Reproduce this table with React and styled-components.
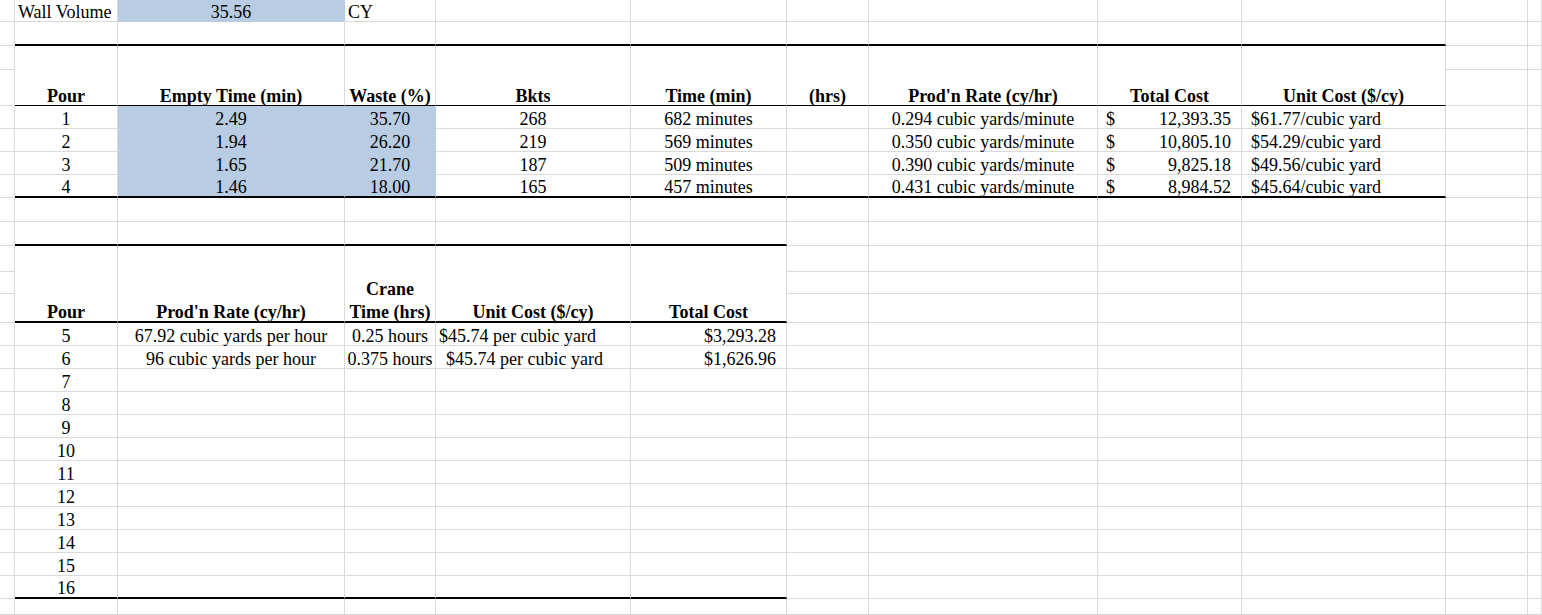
import React from "react";
import styled, { createGlobalStyle, css } from "styled-components";

const GRID = "#dadada";
const BLUE = "#b8cce4";

const GlobalStyle = createGlobalStyle`
  html, body {
    margin: 0;
    padding: 0;
    background: #fff;
    overflow: hidden;
  }
`;

const Sheet = styled.div`
  display: grid;
  grid-template-columns: 15px 103px 227px 91px 195px 156px 82px 229px 144px 204px 82px 1fr;
  grid-template-rows:
    22px 24px 24px 36px repeat(4, 23px) 24px 24px 26px 22px 29px
    repeat(12, 23px) 1fr;
  width: 1542px;
  height: 615px;
  font-family: "Times New Roman", "Liberation Serif", serif;
  font-size: 18px;
  color: #000;
  background: #fff;
`;

const edges = {
  thin: css`
    border-bottom: 1px solid #000;
  `,
  thick: css`
    border-bottom: 2px solid #000;
  `,
};

const justify = { left: "flex-start", right: "flex-end", center: "center" };

const Cell = styled.div`
  box-sizing: border-box;
  display: flex;
  align-items: flex-end;
  justify-content: ${({ $align }) => justify[$align || "center"]};
  padding: 0 ${({ $padRight }) => $padRight ?? 3}px 0 ${({ $pad }) => $pad ?? 3}px;
  grid-row: span ${({ $span }) => $span || 1};
  background: ${({ $fill }) => $fill || "transparent"};
  border-right: 1px solid ${({ $fill }) => $fill || GRID};
  border-bottom: 1px solid ${({ $fill }) => $fill || GRID};
  ${({ $edge }) => $edge && edges[$edge]}
  font-weight: ${({ $bold }) => ($bold ? 700 : 400)};
  line-height: 18px;
  white-space: nowrap;
`;

// accounting format: "$" hugs the left, figure hugs the right
const MoneyCell = styled(Cell)`
  justify-content: space-between;
  padding: 0 10px 0 8px;
`;

// wrapped header text, two lines stacked at the bottom of the cell
const StackedHeader = styled(Cell)`
  flex-direction: column;
  align-items: center;
  justify-content: flex-end;
  gap: 5px;
`;

const blank = () => ({});
const blanks = (n, extra = {}) => Array.from({ length: n }, () => ({ ...extra }));
const covered = (n) => Array.from({ length: n }, () => null);

const pours = [
  { n: 1, empty: "2.49", waste: "35.70", bkts: 268, time: "682 minutes", rate: "0.294 cubic yards/minute", total: "12,393.35", unit: "$61.77/cubic yard" },
  { n: 2, empty: "1.94", waste: "26.20", bkts: 219, time: "569 minutes", rate: "0.350 cubic yards/minute", total: "10,805.10", unit: "$54.29/cubic yard" },
  { n: 3, empty: "1.65", waste: "21.70", bkts: 187, time: "509 minutes", rate: "0.390 cubic yards/minute", total: "9,825.18", unit: "$49.56/cubic yard" },
  { n: 4, empty: "1.46", waste: "18.00", bkts: 165, time: "457 minutes", rate: "0.431 cubic yards/minute", total: "8,984.52", unit: "$45.64/cubic yard" },
];

const cranePours = [
  { n: 5, rate: "67.92 cubic yards per hour", crane: "0.25 hours", unit: "$45.74 per cubic yard", unitPad: 3, total: "$3,293.28" },
  { n: 6, rate: "96 cubic yards per hour", crane: "0.375 hours", unit: "$45.74 per cubic yard", unitPad: 10, total: "$1,626.96" },
  ...Array.from({ length: 10 }, (_, i) => ({ n: i + 7 })),
];

const head = (t, span, edge) => ({ t, bold: true, span, edge });

const rows = [
  [blank(), { t: "Wall Volume", align: "left" }, { t: "35.56", fill: BLUE }, { t: "CY", align: "left" }, ...blanks(8)],
  [blank(), ...blanks(9, { edge: "thick" }), blank(), blank()],
  [
    blank(),
    head("Pour", 2, "thin"),
    head("Empty Time (min)", 2, "thin"),
    head("Waste (%)", 2, "thin"),
    head("Bkts", 2, "thin"),
    head("Time (min)", 2, "thin"),
    head("(hrs)", 2, "thin"),
    head("Prod'n Rate (cy/hr)", 2, "thin"),
    head("Total Cost", 2, "thin"),
    head("Unit Cost ($/cy)", 2, "thin"),
    blank(),
    blank(),
  ],
  [blank(), ...covered(9), blank(), blank()],
  ...pours.map((p, i) => {
    const edge = i === pours.length - 1 ? "thick" : undefined;
    return [
      blank(),
      { t: p.n, edge },
      { t: p.empty, fill: BLUE, edge },
      { t: p.waste, fill: BLUE, edge },
      { t: p.bkts, edge },
      { t: p.time, edge },
      { edge },
      { t: p.rate, edge },
      { money: p.total, edge },
      { t: p.unit, align: "left", pad: 9, edge },
      blank(),
      blank(),
    ];
  }),
  blanks(12),
  [blank(), ...blanks(5, { edge: "thick" }), ...blanks(6)],
  [
    blank(),
    head("Pour", 3, "thick"),
    head("Prod'n Rate (cy/hr)", 3, "thick"),
    { stack: ["Crane", "Time (hrs)"], bold: true, span: 3, edge: "thick" },
    head("Unit Cost ($/cy)", 3, "thick"),
    head("Total Cost", 3, "thick"),
    ...blanks(6),
  ],
  [blank(), ...covered(5), ...blanks(6)],
  [blank(), ...covered(5), ...blanks(6)],
  ...cranePours.map((p, i) => {
    const edge = i === cranePours.length - 1 ? "thick" : undefined;
    return [
      blank(),
      { t: p.n, edge },
      { t: p.rate, edge },
      { t: p.crane, edge },
      { t: p.unit, align: "left", pad: p.unitPad, edge },
      { t: p.total, align: "right", padRight: 10, edge },
      ...blanks(6),
    ];
  }),
  blanks(12),
];

function SheetCell({ c }) {
  const shared = {
    $align: c.align,
    $pad: c.pad,
    $padRight: c.padRight,
    $span: c.span,
    $fill: c.fill,
    $edge: c.edge,
    $bold: c.bold,
  };
  if (c.money) {
    return (
      <MoneyCell {...shared}>
        <span>$</span>
        <span>{c.money}</span>
      </MoneyCell>
    );
  }
  if (c.stack) {
    return (
      <StackedHeader {...shared}>
        {c.stack.map((line) => (
          <span key={line}>{line}</span>
        ))}
      </StackedHeader>
    );
  }
  return <Cell {...shared}>{c.t}</Cell>;
}

export default function App() {
  return (
    <>
      <GlobalStyle />
      <Sheet>
        {rows.flatMap((row, r) =>
          row.map((c, i) => (c ? <SheetCell key={`${r}-${i}`} c={c} /> : null))
        )}
      </Sheet>
    </>
  );
}
